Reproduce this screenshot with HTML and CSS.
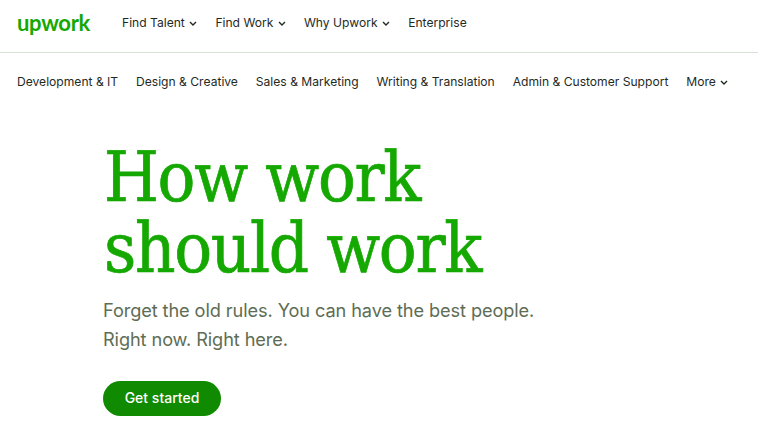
FILE: index.html
```html
<!DOCTYPE html>
<html lang="en">
<head>
    <meta charset="UTF-8">
    <meta name="viewport" content="width=device-width, initial-scale=1.0">
    <title>Upwork</title>
    <link rel="stylesheet" href="styles.css">
</head>
<body>
    <div class="page">
        <header class="top-nav">
            <a class="logo" href="#">upwork</a>
            <nav class="top-links">
                <a href="#">Find Talent <svg class="chevron" viewBox="0 0 8 5"><path d="M1 1l3 3 3-3"/></svg></a>
                <a href="#">Find Work <svg class="chevron" viewBox="0 0 8 5"><path d="M1 1l3 3 3-3"/></svg></a>
                <a href="#">Why Upwork <svg class="chevron" viewBox="0 0 8 5"><path d="M1 1l3 3 3-3"/></svg></a>
                <a href="#">Enterprise</a>
            </nav>
        </header>

        <nav class="cat-nav">
            <a href="#">Development &amp; IT</a>
            <a href="#">Design &amp; Creative</a>
            <a href="#">Sales &amp; Marketing</a>
            <a href="#">Writing &amp; Translation</a>
            <a href="#">Admin &amp; Customer Support</a>
            <a href="#">More <svg class="chevron" viewBox="0 0 8 5"><path d="M1 1l3 3 3-3"/></svg></a>
        </nav>

        <section class="hero">
            <h1>How work<br>should work</h1>
            <p>Forget the old rules. You can have the best people.<br>Right now. Right here.</p>
            <a class="cta" href="#">Get started</a>
        </section>
    </div>
</body>
</html>
```

FILE: styles.css
```css
body {
    font-family: 'Inter', sans-serif;
    background: white;
    margin: 0;
    height: 430px;
    overflow: hidden;
}

a {
    color: #1f2a1f;
    text-decoration: none;
}

.page {
    width: 758px;
}

.top-nav {
    display: flex;
    align-items: center;
    height: 45px;
    padding: 0 0 7px 17px;
    border-bottom: 1px solid #d9e2d9;
}

.logo {
    color: #14a800;
    font-family: 'Lato', sans-serif;
    font-size: 22px;
    font-weight: 700;
    letter-spacing: -0.3px;
    line-height: 24px;
    width: 105px;
}

.top-links {
    display: flex;
    gap: 18.2px;
}

.top-links a,
.cat-nav a {
    font-size: 12.1px;
    white-space: nowrap;
}

.chevron {
    width: 8px;
    height: 5px;
    margin-left: 1px;
    vertical-align: 1px;
    fill: none;
    stroke: #1f2a1f;
    stroke-width: 1.4;
}

.cat-nav {
    display: flex;
    gap: 17.9px;
    padding: 21px 0 0 17px;
    line-height: 16px;
}

.hero {
    padding: 52px 0 0 103px;
}

h1 {
    color: #14a800;
    font-family: 'DejaVu Serif', serif;
    font-stretch: condensed;
    font-size: 70px;
    font-weight: 400;
    line-height: 71px;
    letter-spacing: -1.35px;
    -webkit-text-stroke: 0.7px #14a800;
    margin: 0 0 0 1px;
}

.hero p {
    color: #5e6d55;
    font-size: 18.2px;
    letter-spacing: -0.1px;
    line-height: 29px;
    margin: 12px 0 0;
}

.cta {
    display: inline-flex;
    align-items: center;
    justify-content: center;
    width: 118px;
    height: 35px;
    margin-top: 27px;
    padding-bottom: 2px;
    box-sizing: border-box;
    background: #108a00;
    color: white;
    border-radius: 18px;
    font-size: 14px;
    font-weight: 500;
}
```
